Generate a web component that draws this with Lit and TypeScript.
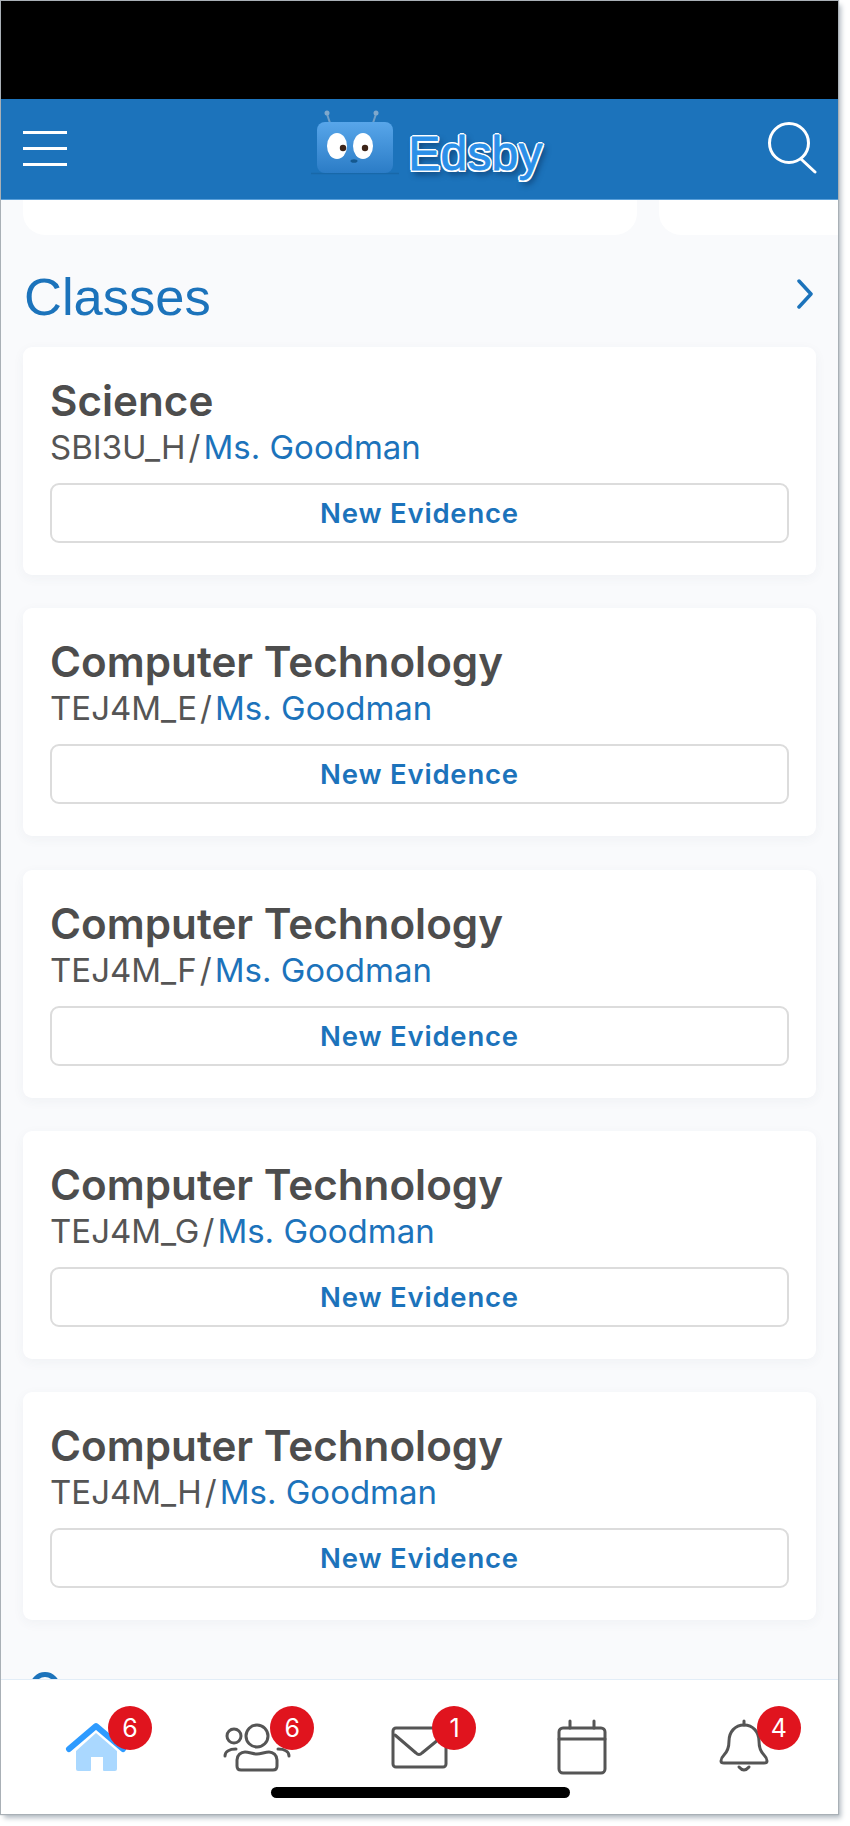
import { LitElement, html, css, svg } from "lit";
import { customElement } from "lit/decorators.js";

const classes = [
  { name: "Science", code: "SBI3U_H" },
  { name: "Computer Technology", code: "TEJ4M_E" },
  { name: "Computer Technology", code: "TEJ4M_F" },
  { name: "Computer Technology", code: "TEJ4M_G" },
  { name: "Computer Technology", code: "TEJ4M_H" },
];

const tabIcons = [
  svg`<path class="house" fill-rule="evenodd" d="M13 31 L33 13 L54 31 V49 q0 2 -2 2 H41 q-1 0 -1 -1 V37 H28 V50 q0 1 -1 1 H15 q-2 0 -2 -2 Z"/><path class="roof" d="M6 29 L33 6 L60 29"/>`,
  svg`<g class="line"><circle cx="32" cy="16" r="11"/><circle cx="9" cy="16" r="7"/><path d="M12 46 v-6 c0-5 4-8 8-8 c4 0 8 2 12 2 s8-2 12-2 c4 0 8 3 8 8 v6 q0 4 -4 4 h-32 q-4 0 -4 -4z"/><path d="M0 36 c0-4 4-7 11-7"/><path d="M53 29 c7 0 11 3 11 7"/></g>`,
  svg`<g class="line"><rect x="6" y="8" width="53" height="39" rx="3"/><path d="M8 15 L29 33 q3 3 6 0 L57 15"/></g>`,
  svg`<g class="line"><rect x="9" y="8" width="46" height="45" rx="4"/><path d="M9 19 H55 M20 1 V8 M44 1 V8"/></g>`,
  svg`<g class="line"><path d="M32 5 c-9 0-15 7-15 16 c0 8-2 11-5 14 c-3 3-3 5-3 6 q0 2 3 2 h40 q3 0 3-2 c0-1 0-3-3-6 c-3-3-5-6-5-14 c0-9-6-16-15-16z"/><path d="M32 1 V5 M27 47 q5 6 10 0"/></g>`,
];
const badges = ["6", "6", "1", "", "4"];

@customElement("app-root")
export class AppRoot extends LitElement {
  static styles = css`
    :host { display: block; width: 850px; height: 1826px; background: #fff; font-family: Inter, "Liberation Sans", sans-serif; overflow: hidden; }
    .frame { width: 837px; height: 1813px; margin: 1px 0 0 1px; display: flex; flex-direction: column; background: #f9fafc; box-shadow: 0 0 1px 1px #a9b0b6, 3px 4px 5px #b4bcc4; overflow: hidden; }
    .status { height: 98px; background: #000; flex: none; }
    .header { height: 101px; flex: none; background: #1c73bb; border-bottom: 1px solid #5aa0da; box-sizing: border-box; display: flex; align-items: flex-start; justify-content: space-between; }
    .burger { margin: 32px 0 0 22px; width: 44px; display: flex; flex-direction: column; gap: 13px; }
    .burger i { display: block; height: 3px; background: #fff; }
    .brand { display: flex; margin-top: 11px; margin-left: 19px; }
    .word {
      font: 400 48px/1 "Liberation Sans", sans-serif; color: #2a8fe8; -webkit-text-stroke: 0.8px #2a8fe8;
      margin: 20px 0 0 8px; letter-spacing: 0.2px;
      text-shadow: 2px 0 0 #fff, -2px 0 0 #fff, 0 2px 0 #fff, 0 -2px 0 #fff, 1.5px 1.5px 0 #fff, -1.5px 1.5px 0 #fff, 1.5px -1.5px 0 #fff, -1.5px -1.5px 0 #fff, 3px 4px 6px rgba(8, 40, 80, .8);
    }
    .search { margin: 22px 21px 0 0; }
    .content { flex: 1; min-height: 0; overflow: hidden; }
    .peek { display: flex; gap: 22px; padding-left: 22px; height: 35px; overflow: hidden; }
    .peek div { flex: none; width: 614px; height: 35px; background: #fff; border-radius: 0 0 22px 22px; }
    .section { display: flex; justify-content: space-between; align-items: center; box-sizing: border-box; padding: 11px 24px 0 23px; height: 112px; }
    .section h2 { margin: 0; font: 400 52.5px/60px "Liberation Sans", sans-serif; color: #1c73bb; }
    .chev { margin-bottom: 6px; }
    .list { display: flex; flex-direction: column; gap: 33.25px; padding: 0 22px 0 22px; }
    .card { height: 228px; box-sizing: border-box; padding: 30px 27px 0; background: #fff; border-radius: 9px; box-shadow: 0 3px 12px rgba(60, 70, 90, .05); }
    .title { font-weight: 600; font-size: 42.2px; line-height: 48px; color: #4d4d4d; }
    .sub { display: flex; align-items: baseline; font-size: 33px; line-height: 38px; color: #555; margin: 3px 0 17px; }
    .slash { margin: 0 3px; }
    .teacher { color: #1c73bb; }
    .btn { height: 60px; box-sizing: border-box; border: 2px solid #dcdcdc; border-radius: 9px; background: #fff; display: flex; align-items: center; justify-content: center; font-weight: 600; font-size: 27.5px; letter-spacing: 0.8px; color: #1c73bb; }
    .next { padding: 52px 0 0 29px; height: 40px; }
    .next i { display: block; width: 30px; height: 30px; box-sizing: border-box; border: 5px solid #1c73bb; border-radius: 50%; }
    .tabs { position: relative; height: 135px; flex: none; box-sizing: border-box; background: #fff; border-top: 1px solid #e2edf7; padding: 40px 13px 0; display: grid; grid-template-columns: repeat(5, 1fr); }
    .tab { position: relative; display: flex; justify-content: center; height: 60px; }
    .tab svg { overflow: visible; }
    .badge { position: absolute; top: -14px; left: 50%; margin-left: 13px; width: 44px; height: 44px; border-radius: 50%; background: #e0141e; color: #fff; font-size: 25px; line-height: 44px; text-align: center; }
    .line { fill: none; stroke: #555; stroke-width: 3; stroke-linecap: round; stroke-linejoin: round; }
    .house { fill: #aad8ff; }
    .roof { fill: none; stroke: #2e9bff; stroke-width: 6; stroke-linecap: round; stroke-linejoin: round; }
    .home-bar { position: absolute; left: 270px; top: 107px; width: 299px; height: 11px; border-radius: 6px; background: #000; }
  `;

  render() {
    return html`<div class="frame">
      <div class="status"></div>
      <div class="header">
        <div class="burger"><i></i><i></i><i></i></div>
        <div class="brand">
          <svg width="90" height="70" viewBox="0 0 90 70">
            <defs>
              <linearGradient id="bot" x1="0" y1="0" x2="0" y2="1"><stop offset="0" stop-color="#58a6ea"/><stop offset="1" stop-color="#2b7cc6"/></linearGradient>
            </defs>
            <path d="M20 13 L17 4 M63 13 L66 4" stroke="#6f9fc8" stroke-width="2" fill="none"/>
            <circle cx="17" cy="3" r="2.5" fill="#7fa8cc"/><circle cx="66" cy="3" r="2.5" fill="#7fa8cc"/>
            <path d="M1 63.5 H89" stroke="#14588f" stroke-width="1.5" opacity=".4"/>
            <rect x="7" y="12" width="76" height="51" rx="8" fill="url(#bot)"/>
            <ellipse cx="27" cy="36" rx="10" ry="13" fill="#fff"/><ellipse cx="53" cy="36" rx="10" ry="13" fill="#fff"/>
            <circle cx="33" cy="38" r="3.2" fill="#3d2418"/><circle cx="55" cy="38" r="3.2" fill="#3d2418"/>
            <ellipse cx="44" cy="51" rx="3.5" ry="1.8" fill="#14588f"/>
          </svg>
          <span class="word">Edsby</span>
        </div>
        <svg class="search" width="50" height="54" viewBox="0 0 50 54" fill="none" stroke="#fff" stroke-width="3" stroke-linecap="round">
          <circle cx="22" cy="22" r="19.5"/><path d="M34 38 L48 51"/>
        </svg>
      </div>
      <div class="content">
        <div class="peek"><div></div><div></div></div>
        <div class="section">
          <h2>Classes</h2>
          <svg class="chev" width="18" height="30" viewBox="0 0 18 30" fill="none" stroke="#1c73bb" stroke-width="3.5" stroke-linecap="round" stroke-linejoin="round"><path d="M3 2 L15 15 L3 28"/></svg>
        </div>
        <div class="list">
          ${classes.map((c) => html`<div class="card">
            <div class="title">${c.name}</div>
            <div class="sub"><span>${c.code}</span><span class="slash">/</span><span class="teacher">Ms. Goodman</span></div>
            <div class="btn">New Evidence</div>
          </div>`)}
        </div>
        <div class="next"><i></i></div>
      </div>
      <div class="tabs">
        ${tabIcons.map((icon, i) => html`<div class="tab">
          <svg width="64" height="56" viewBox="0 0 64 56">${icon}</svg>
          ${badges[i] ? html`<span class="badge">${badges[i]}</span>` : ""}
        </div>`)}
        <div class="home-bar"></div>
      </div>
    </div>`;
  }
}
